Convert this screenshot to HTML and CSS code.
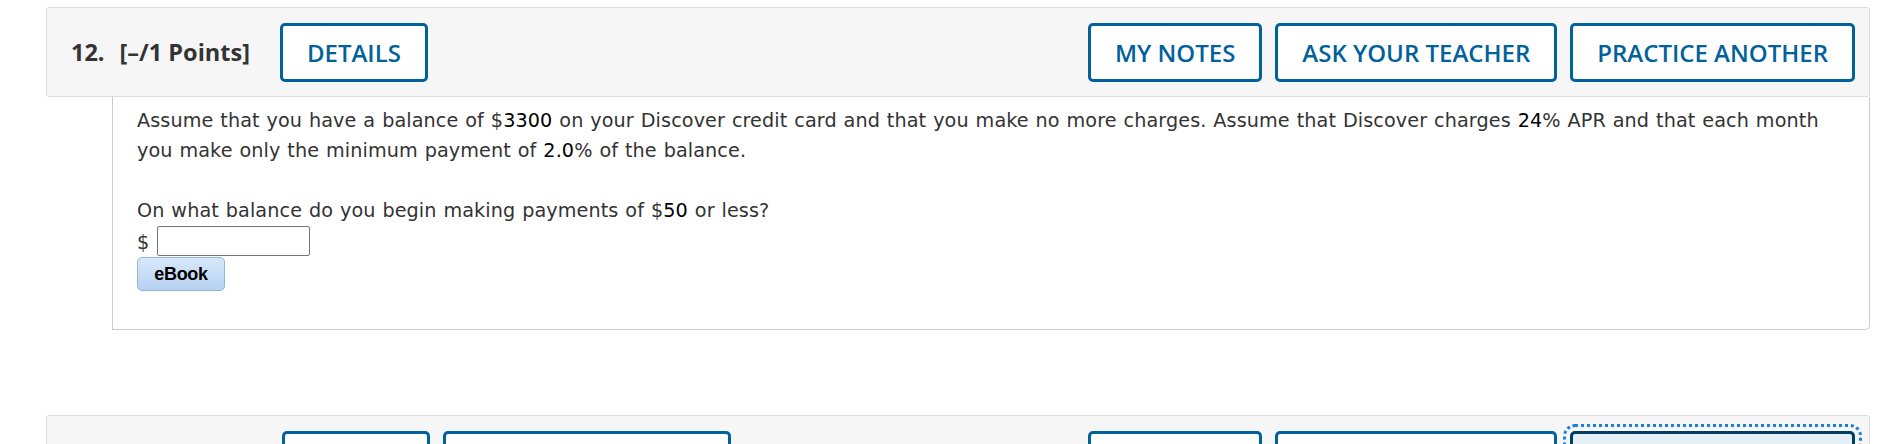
FILE: index.html
```html
<!DOCTYPE html>
<html lang="en">
<head>
    <meta charset="UTF-8">
    <meta name="viewport" content="width=device-width, initial-scale=1.0">
    <title>Assignment - Credit Card Payments</title>
    <link rel="stylesheet" href="styles.css">
</head>
<body>
    <div class="questions">
        <div class="question">
            <div class="question-head">
                <span class="q-number">12.</span>
                <span class="q-points">[&ndash;/1 Points]</span>
                <button class="btn">DETAILS</button>
                <div class="head-actions">
                    <button class="btn">MY NOTES</button>
                    <button class="btn">ASK YOUR TEACHER</button>
                    <button class="btn">PRACTICE ANOTHER</button>
                </div>
            </div>
            <div class="question-body">
                <div class="question-text">
                    Assume that you have a balance of $<span class="val">3300</span> on your Discover credit card and that you make no more charges. Assume that Discover charges <span class="val">24</span>% APR and that each month you make only the minimum payment of <span class="val">2.0</span>% of the balance.<br><br>
                    On what balance do you begin making payments of $<span class="val">50</span> or less?
                </div>
                <div class="answer-row">
                    <span class="unit">$</span>
                    <input type="text" class="answer-box">
                </div>
                <button class="ebook">eBook</button>
            </div>
        </div>

        <div class="question">
            <div class="question-head">
                <span class="q-number">13.</span>
                <span class="q-points">[0/1 Points]</span>
                <button class="btn">DETAILS</button>
                <button class="btn">PREVIOUS ANSWERS</button>
                <div class="head-actions">
                    <button class="btn">MY NOTES</button>
                    <button class="btn">ASK YOUR TEACHER</button>
                    <button class="btn btn-focus">PRACTICE ANOTHER</button>
                </div>
            </div>
        </div>
    </div>
</body>
</html>
```

FILE: styles.css
```css
body {
    margin: 0;
    background-color: #fff;
    font-family: "Open Sans", "DejaVu Sans", sans-serif;
    color: #333;
}

.questions {
    padding: 7px 23px 0 46px;
}

.question {
    margin-bottom: 85px;
}

.question-head {
    display: flex;
    align-items: center;
    height: 60px;
    padding: 14px 14px 14px 24px;
    background-color: #f6f6f6;
    border: 1px solid #ddd;
    border-radius: 3px;
}

.q-number,
.q-points {
    font-size: 23.5px;
    font-weight: 700;
    color: #333;
}

.q-number {
    margin-right: 15px;
}

.q-points {
    margin-right: 30px;
}

.btn {
    height: 59px;
    padding: 0 24px;
    font-family: "Open Sans", sans-serif;
    font-size: 24px;
    font-weight: 600;
    color: #01619b;
    background-color: #fff;
    border: 3px solid #01619b;
    border-radius: 5px;
    cursor: pointer;
    margin-right: 13px;
}

.head-actions {
    display: flex;
    gap: 13px;
    margin-left: auto;
}

.head-actions .btn {
    margin-right: 0;
}

.btn-focus {
    color: #003f63;
    background-color: #e6eef6;
    border-color: #003f63;
    outline: 3px dotted #1a80e0;
    outline-offset: 4px;
}

.question-body {
    margin-left: 66px;
    padding: 9px 25px 38px 24px;
    border: 1px solid #ccc;
    border-top: none;
    border-bottom-right-radius: 5px;
    font-family: "DejaVu Sans", Verdana, sans-serif;
    font-size: 19.2px;
    line-height: 30px;
    letter-spacing: 0.1px;
    word-spacing: 0.7px;
    color: #333;
}

.val {
    color: #000;
}

.answer-row {
    display: flex;
    align-items: center;
    height: 30px;
}

.unit {
    margin-right: 8px;
    padding-top: 3px;
}

.answer-box {
    box-sizing: border-box;
    width: 153px;
    height: 30px;
    margin: 0;
    border: 1px solid #767676;
    border-radius: 2px;
}

.ebook {
    display: block;
    width: 88px;
    height: 34px;
    margin-top: 1px;
    padding: 0;
    font-family: "Liberation Sans", Arial, sans-serif;
    font-size: 18px;
    font-weight: 700;
    letter-spacing: -0.3px;
    color: #000;
    background: linear-gradient(#d8e8fb, #b6d1f1);
    border: 1px solid #93b4df;
    border-radius: 5px;
    cursor: pointer;
}
```
